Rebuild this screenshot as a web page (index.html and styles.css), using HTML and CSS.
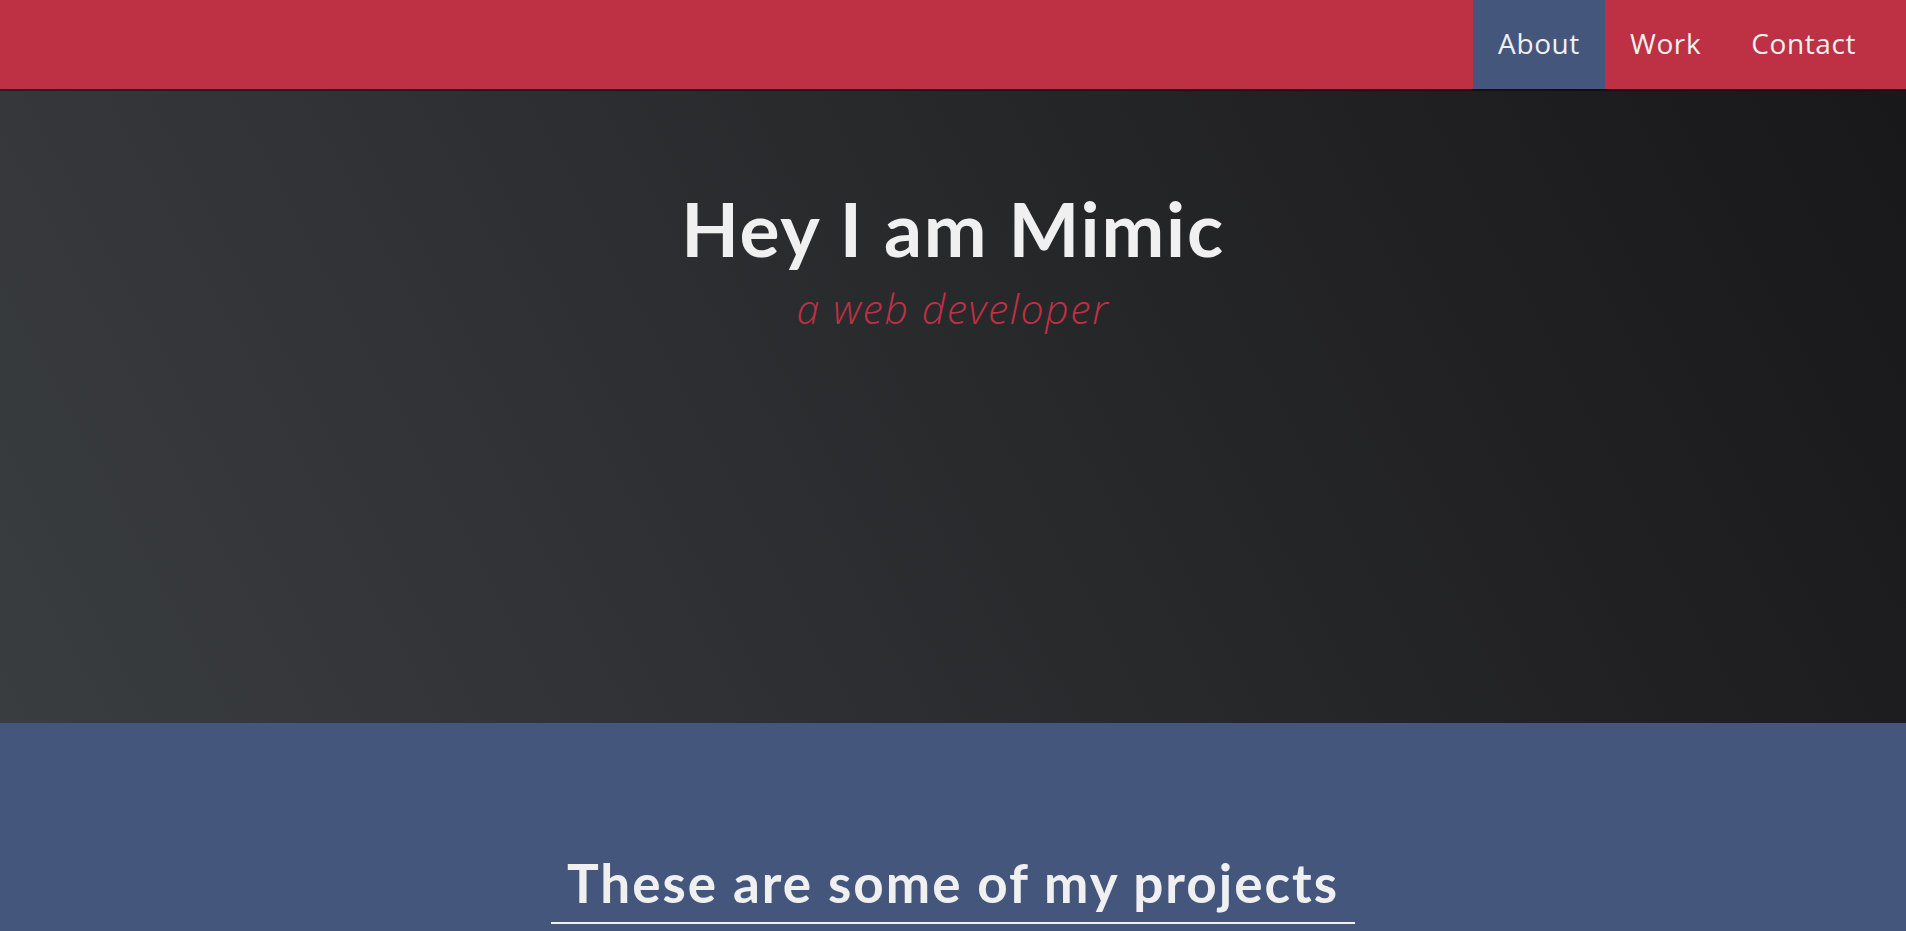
FILE: index.html
```html
<!DOCTYPE html>
<html lang="en">
<head>
<meta charset="utf-8">
<title>Mimic</title>
<link rel="stylesheet" href="styles.css">
</head>
<body>
<nav class="nav">
  <ul class="nav-list">
    <li><a class="nav-link active" href="#welcome">About</a></li>
    <li><a class="nav-link" href="#projects">Work</a></li>
    <li><a class="nav-link" href="#contact">Contact</a></li>
  </ul>
</nav>
<section class="welcome" id="welcome">
  <h1 class="welcome-title">Hey I am Mimic</h1>
  <p class="welcome-sub">a web developer</p>
</section>
<section class="projects" id="projects">
  <h2 class="projects-title">These are some of my projects</h2>
</section>
</body>
</html>
```
FILE: styles.css
```css
* { box-sizing: border-box; }
html, body { margin: 0; padding: 0; }
body {
  background: #45567d;
  color: #f0f0f0;
  font-family: "Lato", "Open Sans", sans-serif;
  overflow: hidden;
}
.nav {
  position: relative;
  z-index: 2;
  height: 89px;
  background: #be3144;
  box-shadow: 0 2px 0 rgba(0, 0, 0, 0.4);
  display: flex;
  justify-content: flex-end;
}
.nav-list {
  list-style: none;
  margin: 0;
  padding: 0 25px 0 0;
  display: flex;
}
.nav-link {
  display: block;
  height: 89px;
  padding: 0 25px;
  line-height: 87px;
  font-family: "Open Sans", sans-serif;
  font-size: 28px;
  font-weight: 400;
  letter-spacing: 0.6px;
  color: #f0f0f0;
  text-decoration: none;
}
.nav-link.active { background: #45567d; }
.welcome {
  height: 634px;
  padding-top: 102px;
  background: linear-gradient(62deg, #3a3d40 0%, #181719 100%);
  text-align: center;
}
.welcome-title {
  margin: 0;
  font-family: "Lato", sans-serif;
  font-weight: 700;
  font-size: 75px;
  line-height: 75px;
  letter-spacing: 1.8px;
}
.welcome-sub {
  margin: 22px 0 0;
  font-family: "Open Sans", sans-serif;
  font-weight: 300;
  font-style: italic;
  font-size: 41px;
  line-height: 41px;
  letter-spacing: 1.6px;
  color: #be3144;
}
.projects {
  padding-top: 133px;
  text-align: center;
  height: 600px;
}
.projects-title {
  display: inline-block;
  margin: 0;
  padding: 0 16px 13px;
  border-bottom: 2px solid #f0f0f0;
  font-family: "Lato", sans-serif;
  font-weight: 700;
  font-size: 53px;
  line-height: 53px;
  letter-spacing: 2px;
}
```
